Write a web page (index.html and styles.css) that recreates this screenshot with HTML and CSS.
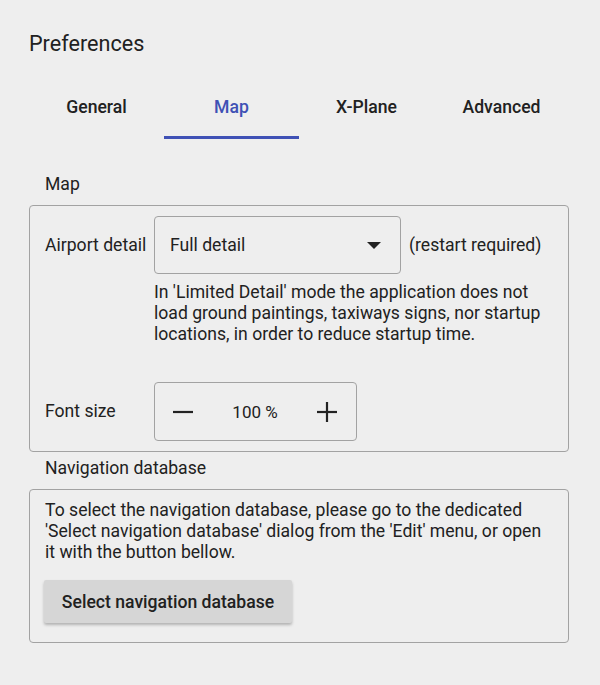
FILE: index.html
```html
<!DOCTYPE html>
<html lang="en">
<head>
    <meta charset="UTF-8">
    <title>Preferences</title>
    <link rel="stylesheet" href="styles.css">
</head>
<body>
    <div class="dialog">
        <h1 class="title">Preferences</h1>

        <!-- Tab bar -->
        <div class="tabs">
            <button class="tab">General</button>
            <button class="tab active">Map</button>
            <button class="tab">X-Plane</button>
            <button class="tab">Advanced</button>
        </div>

        <!-- Map page -->
        <div class="group-label">Map</div>
        <div class="frame map-frame">
            <span class="field-label">Airport detail</span>
            <div class="combo">
                <span>Full detail</span>
                <span class="combo-arrow"></span>
            </div>
            <span class="note">(restart required)</span>

            <p class="description">In 'Limited Detail' mode the application does not<br>load ground paintings, taxiways signs, nor startup<br>locations, in order to reduce startup time.</p>

            <span class="field-label font-label">Font size</span>
            <div class="spinbox">
                <svg class="spin-icon" width="22" height="22" viewBox="0 0 22 22">
                    <line x1="1" y1="11" x2="21" y2="11" stroke="#222" stroke-width="2.2"/>
                </svg>
                <span class="spin-value">100 %</span>
                <svg class="spin-icon" width="22" height="22" viewBox="0 0 22 22">
                    <line x1="1" y1="11" x2="21" y2="11" stroke="#222" stroke-width="2.2"/>
                    <line x1="11" y1="1" x2="11" y2="21" stroke="#222" stroke-width="2.2"/>
                </svg>
            </div>
        </div>

        <div class="group-label nav-label">Navigation database</div>
        <div class="frame nav-frame">
            <p class="nav-text">To select the navigation database, please go to the dedicated<br>'Select navigation database' dialog from the 'Edit' menu, or open<br>it with the button bellow.</p>
            <button class="raised">Select navigation database</button>
        </div>
    </div>
</body>
</html>
```

FILE: styles.css
```css
body {
    margin: 0;
    background-color: #eeeeee;
    color: #212121;
    font-family: Roboto, "Noto Sans", sans-serif;
    font-size: 17.6px;
}

.dialog {
    padding: 31px 31px 0 29px;
}

.title {
    margin: 0;
    font-size: 21.6px;
    font-weight: 400;
    line-height: 26px;
}

/* Tab bar */
.tabs {
    display: grid;
    grid-template-columns: repeat(4, 1fr);
    margin-top: 28px;
}

.tab {
    background: none;
    border: none;
    border-bottom: 3px solid transparent;
    padding: 12px 0 18px;
    font-family: inherit;
    font-size: 17.6px;
    font-weight: 500;
    line-height: 21px;
    color: #212121;
}

.tab.active {
    color: #3f51b5;
    border-bottom-color: #3f51b5;
}

.group-label {
    margin: 35px 0 10px 16px;
    line-height: 21px;
}

.nav-label {
    margin-top: 6px;
}

.frame {
    border: 1px solid #a2a2a2;
    border-radius: 4px;
}

.map-frame {
    display: grid;
    grid-template-columns: 101px auto 1fr;
    column-gap: 8px;
    align-items: center;
    padding: 10px 15px 10px 15px;
}

.field-label {
    white-space: nowrap;
    line-height: 21px;
}

.combo {
    width: 247px;
    height: 58px;
    box-sizing: border-box;
    border: 1px solid #a2a2a2;
    border-radius: 4px;
    display: flex;
    align-items: center;
    justify-content: space-between;
    padding: 0 19px 0 15px;
}

.combo-arrow {
    width: 0;
    height: 0;
    border-left: 7px solid transparent;
    border-right: 7px solid transparent;
    border-top: 7px solid #222;
}

.note {
    white-space: nowrap;
}

.description {
    grid-column: 2 / 4;
    margin: 8px 0 0;
    line-height: 21px;
    white-space: nowrap;
}

.font-label {
    margin-top: 37px;
}

.spinbox {
    margin-top: 37px;
    width: 203px;
    height: 59px;
    box-sizing: border-box;
    border: 1px solid #a2a2a2;
    border-radius: 4px;
    display: flex;
    align-items: center;
    justify-content: space-between;
    padding: 0 18px 0 17px;
}

.spin-icon {
    display: block;
}

.spin-value {
    font-size: 17px;
}

.nav-frame {
    padding: 10px 15px 19px;
}

.nav-text {
    margin: 0;
    line-height: 21px;
    white-space: nowrap;
}

.raised {
    margin: 17px 0 0 -1px;
    width: 248px;
    height: 43px;
    border: none;
    border-radius: 2px;
    background-color: #d6d6d6;
    box-shadow: 0 2px 3px rgba(0, 0, 0, 0.25);
    font-family: inherit;
    font-size: 17.6px;
    font-weight: 500;
    color: #212121;
}
```
